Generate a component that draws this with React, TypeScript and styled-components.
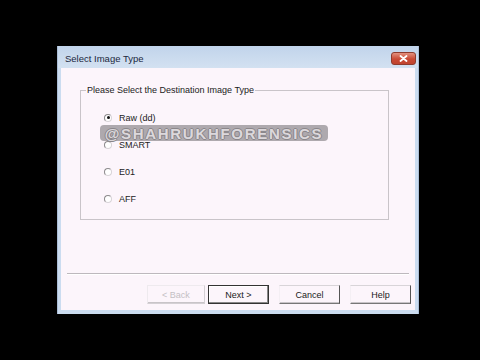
import React from "react";
import styled, { createGlobalStyle } from "styled-components";

const Global = createGlobalStyle`
  html, body { margin: 0; padding: 0; background: #000; }
  body { font-family: "Liberation Sans", Arial, sans-serif; }
`;

const Stage = styled.div`
  width: 480px;
  height: 360px;
  overflow: hidden;
  background: #000;
  padding: 46px 0 0 57px;
  box-sizing: border-box;
`;

const Window = styled.div`
  width: 362px;
  height: 268px;
  display: flex;
  flex-direction: column;
  background: #cbdcf0;
  border-left: 1px solid #aabdd6;
  border-right: 1px solid #aabdd6;
  box-sizing: border-box;
`;

const TitleBar = styled.div`
  height: 22px;
  flex: none;
  display: flex;
  align-items: flex-start;
  padding-left: 7px;
  background: linear-gradient(#c1d4eb, #d3e1f1);
`;

const Title = styled.span`
  font-size: 9.5px;
  color: #1b2840;
  line-height: 12px;
  margin-top: 7px;
`;

const CloseButton = styled.div`
  margin-left: auto;
  margin-right: 2px;
  margin-top: 6px;
  width: 25px;
  height: 13px;
  box-sizing: border-box;
  border: 1px solid #8e3b2e;
  border-radius: 3px;
  background: linear-gradient(#e3917f, #c94a35 55%, #c0432f);
  display: flex;
  align-items: center;
  justify-content: center;
`;

const Client = styled.div`
  flex: 1;
  margin: 0 3px 4px 3px;
  background: #fcf5fb;
  position: relative;
  display: flex;
  flex-direction: column;
`;

const GroupBox = styled.fieldset`
  margin: 17px 26px 0 19px;
  height: 135px;
  box-sizing: border-box;
  border: 1px solid #c9c4c9;
  border-radius: 0;
  padding: 0 0 0 5px;
  min-width: 0;
`;

const Legend = styled.legend`
  font-size: 9px;
  line-height: 11px;
  color: #222;
  padding: 0 1px;
  margin-left: 0;
`;

const RadioList = styled.div`
  display: flex;
  flex-direction: column;
  gap: 16px;
  padding: 16px 0 0 18px;
`;

const RadioRow = styled.label`
  display: flex;
  align-items: center;
  height: 11px;
  font-size: 9px;
  color: #222;
`;

const RadioCircle = styled.span<{ $checked?: boolean }>`
  width: 8px;
  height: 8px;
  box-sizing: border-box;
  border-radius: 50%;
  border: 1px solid #8c8a8c;
  border-right-color: #d8d4d8;
  border-bottom-color: #d8d4d8;
  background: #fff;
  margin-right: 7px;
  display: flex;
  align-items: center;
  justify-content: center;
  &::after {
    content: "";
    width: 3px;
    height: 3px;
    border-radius: 50%;
    background: ${(p) => (p.$checked ? "#111" : "transparent")};
  }
`;

const Watermark = styled.div`
  position: absolute;
  left: 39px;
  top: 57px;
  width: 228px;
  height: 16px;
  border-radius: 4px;
  background: rgba(160, 155, 160, 0.85);
  display: flex;
  align-items: center;
  justify-content: center;
  font-family: "Liberation Sans", Arial, sans-serif;
  font-weight: bold;
  font-size: 15px;
  letter-spacing: 1.7px;
  color: #dcd8dc;
  text-shadow: -1px 0 #8a868a, 1px 0 #8a868a, 0 -1px #8a868a, 0 1px #8a868a;
`;

const Separator = styled.div`
  margin: 53px 6px 0 6px;
  height: 1px;
  background: #bdb8bd;
  border-bottom: 1px solid #fff;
`;

const ButtonRow = styled.div`
  display: flex;
  justify-content: flex-end;
  margin-top: 10px;
  padding-right: 4px;
`;

const Button = styled.div<{ $default?: boolean; $disabled?: boolean; $gap: number }>`
  width: ${(p) => (p.$disabled ? 58 : 61)}px;
  height: 19px;
  margin-left: ${(p) => p.$gap}px;
  box-sizing: border-box;
  display: flex;
  align-items: center;
  justify-content: center;
  font-size: 9px;
  color: ${(p) => (p.$disabled ? "#c4c0c4" : "#1a1a1a")};
  background: #fcf5fb;
  border-top: 1px solid ${(p) => (p.$default ? "#333" : p.$disabled ? "#eeeaee" : "#d8d4d8")};
  border-left: 1px solid ${(p) => (p.$default ? "#333" : p.$disabled ? "#eeeaee" : "#f4eff4")};
  border-right: 1px solid ${(p) => (p.$default ? "#333" : p.$disabled ? "#d4d0d4" : "#555")};
  border-bottom: 1px solid ${(p) => (p.$default ? "#333" : p.$disabled ? "#d4d0d4" : "#777")};
  box-shadow: ${(p) => (p.$default ? "inset -1px -1px #888, inset 1px 1px #fff" : "inset 0 -1px #c8c4c8")};
`;

const options = [
  { label: "Raw (dd)", checked: true },
  { label: "SMART" },
  { label: "E01" },
  { label: "AFF" },
];

export default function App() {
  return (
    <Stage>
      <Global />
      <Window>
        <TitleBar>
          <Title>Select Image Type</Title>
          <CloseButton>
            <svg width="9" height="7" viewBox="0 0 9 7">
              <path d="M1.5 1 L7.5 6 M7.5 1 L1.5 6" stroke="#fff" strokeWidth="1.8" strokeLinecap="round" />
            </svg>
          </CloseButton>
        </TitleBar>
        <Client>
          <GroupBox>
            <Legend>Please Select the Destination Image Type</Legend>
            <RadioList>
              {options.map((o) => (
                <RadioRow key={o.label}>
                  <RadioCircle $checked={o.checked} />
                  {o.label}
                </RadioRow>
              ))}
            </RadioList>
          </GroupBox>
          <Separator />
          <ButtonRow>
            <Button $disabled $gap={0}>&lt; Back</Button>
            <Button $default $gap={3}>Next &gt;</Button>
            <Button $gap={10}>Cancel</Button>
            <Button $gap={10}>Help</Button>
          </ButtonRow>
          <Watermark>@SHAHRUKHFORENSICS</Watermark>
        </Client>
      </Window>
    </Stage>
  );
}
